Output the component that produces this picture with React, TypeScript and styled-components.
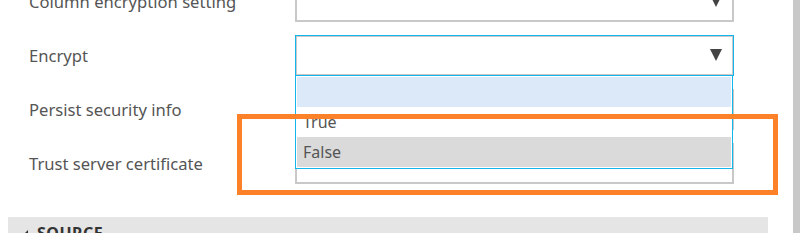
import React from 'react';
import styled, { createGlobalStyle } from 'styled-components';

const GlobalStyle = createGlobalStyle`
  body {
    margin: 0;
    background: #fff;
    font-family: 'Noto Sans', 'Open Sans', sans-serif;
  }
`;

const Page = styled.div`
  position: relative;
  display: flex;
  width: 800px;
  height: 233px;
  overflow: hidden;
  background: #fff;
`;

const Content = styled.div`
  flex: 1;
  padding: 0 25px 0 8px;
`;

const Scrollbar = styled.div`
  width: 7px;
  background: #c8c8c8;
`;

const Form = styled.div`
  display: flex;
  flex-direction: column;
  gap: 13px;
  margin-top: -19px;
`;

const Row = styled.div`
  display: flex;
  align-items: center;
  height: 41px;
`;

const Label = styled.div`
  width: 287px;
  padding-left: 21px;
  box-sizing: border-box;
  font-size: 16.6px;
  color: #555;
`;

const SelectBox = styled.div<{ $focused?: boolean }>`
  position: relative;
  box-sizing: border-box;
  border: ${(p) => (p.$focused ? '1px solid #c8c8c8' : '2px solid #c8c8c8')};
  outline: ${(p) => (p.$focused ? '1px solid #13b5ea' : 'none')};
  margin: ${(p) => (p.$focused ? '1px' : '0')};
  width: ${(p) => (p.$focused ? '437px' : '439px')};
  height: ${(p) => (p.$focused ? '39px' : '41px')};
  background: #fff;
`;

const Arrow = styled.span`
  position: absolute;
  right: 10px;
  top: 50%;
  margin-top: -7px;
  width: 0;
  height: 0;
  border-left: 6px solid transparent;
  border-right: 6px solid transparent;
  border-top: 12px solid #444;
`;

const Dropdown = styled.ul`
  position: absolute;
  z-index: 2;
  top: 100%;
  left: -2px;
  width: 438px;
  box-sizing: border-box;
  margin: 1px 0 0;
  padding: 1px;
  list-style: none;
  background: #fff;
  border: 1px solid #13b5ea;
`;

const Option = styled.li<{ $tone?: 'selected' | 'hover' }>`
  height: 30px;
  line-height: 30px;
  padding-left: 6px;
  font-size: 16px;
  color: #555;
  background: ${(p) =>
    p.$tone === 'selected' ? '#dce9f9' : p.$tone === 'hover' ? '#dadada' : '#fff'};
`;

const SectionBar = styled.div`
  display: flex;
  align-items: center;
  gap: 9px;
  height: 32px;
  margin-top: 33px;
  padding-left: 14px;
  background: #e5e5e5;
  font-size: 16px;
  font-weight: 700;
  color: #333;
  letter-spacing: 0.5px;
`;

const Caret = styled.span`
  width: 0;
  height: 0;
  border-left: 6px solid transparent;
  border-bottom: 6px solid #333;
`;

const Highlight = styled.div`
  position: absolute;
  left: 237px;
  top: 114px;
  width: 541px;
  height: 81px;
  box-sizing: border-box;
  border: 5px solid #fd8128;
  z-index: 3;
  pointer-events: none;
`;

export default function App() {
  return (
    <>
      <GlobalStyle />
      <Page>
        <Content>
          <Form>
            <Row>
              <Label>Column encryption setting</Label>
              <SelectBox>
                <Arrow />
              </SelectBox>
            </Row>
            <Row>
              <Label>Encrypt</Label>
              <SelectBox $focused>
                <Arrow />
                <Dropdown>
                  <Option $tone="selected">&nbsp;</Option>
                  <Option>True</Option>
                  <Option $tone="hover">False</Option>
                </Dropdown>
              </SelectBox>
            </Row>
            <Row>
              <Label>Persist security info</Label>
              <SelectBox>
                <Arrow />
              </SelectBox>
            </Row>
            <Row>
              <Label>Trust server certificate</Label>
              <SelectBox>
                <Arrow />
              </SelectBox>
            </Row>
          </Form>
          <SectionBar>
            <Caret />
            SOURCE
          </SectionBar>
        </Content>
        <Scrollbar />
        <Highlight />
      </Page>
    </>
  );
}
